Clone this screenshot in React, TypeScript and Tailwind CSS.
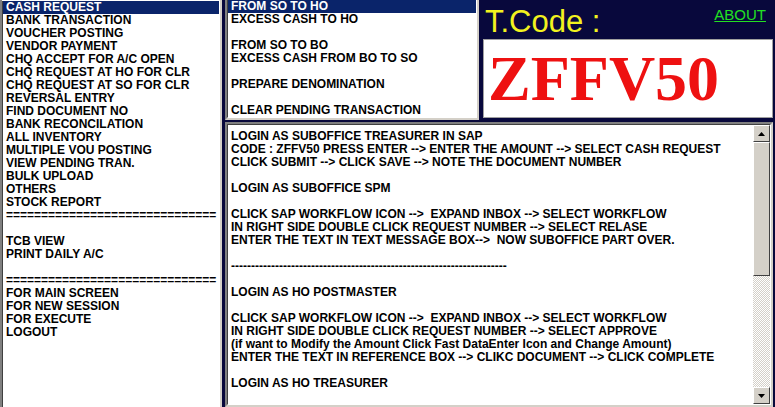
import React from 'react'

const mainItems = [
  'CASH REQUEST',
  'BANK TRANSACTION',
  'VOUCHER POSTING',
  'VENDOR PAYMENT',
  'CHQ ACCEPT FOR A/C OPEN',
  'CHQ REQUEST AT HO FOR CLR',
  'CHQ REQUEST AT SO FOR CLR',
  'REVERSAL ENTRY',
  'FIND DOCUMENT NO',
  'BANK RECONCILATION',
  'ALL INVENTORY',
  'MULTIPLE VOU POSTING',
  'VIEW PENDING TRAN.',
  'BULK UPLOAD',
  'OTHERS',
  'STOCK REPORT',
  '==============================',
  '',
  'TCB VIEW',
  'PRINT DAILY A/C',
  '',
  '==============================',
  'FOR MAIN SCREEN',
  'FOR NEW SESSION',
  'FOR EXECUTE',
  'LOGOUT',
]

const subItems = [
  'FROM SO TO HO',
  'EXCESS CASH TO HO',
  '',
  'FROM SO TO BO',
  'EXCESS CASH FROM BO TO SO',
  '',
  'PREPARE DENOMINATION',
  '',
  'CLEAR PENDING TRANSACTION',
]

const steps = [
  'LOGIN AS SUBOFFICE TREASURER IN SAP',
  'CODE : ZFFV50 PRESS ENTER --> ENTER THE AMOUNT --> SELECT CASH REQUEST',
  'CLICK SUBMIT --> CLICK SAVE --> NOTE THE DOCUMENT NUMBER',
  '',
  'LOGIN AS SUBOFFICE SPM',
  '',
  'CLICK SAP WORKFLOW ICON -->  EXPAND INBOX --> SELECT WORKFLOW',
  'IN RIGHT SIDE DOUBLE CLICK REQUEST NUMBER --> SELECT RELASE',
  'ENTER THE TEXT IN TEXT MESSAGE BOX-->  NOW SUBOFFICE PART OVER.',
  '',
  '---------------------------------------------------------------------',
  '',
  'LOGIN AS HO POSTMASTER',
  '',
  'CLICK SAP WORKFLOW ICON -->  EXPAND INBOX --> SELECT WORKFLOW',
  'IN RIGHT SIDE DOUBLE CLICK REQUEST NUMBER --> SELECT APPROVE',
  '(if want to Modify the Amount Click Fast DataEnter Icon and Change Amount)',
  'ENTER THE TEXT IN REFERENCE BOX --> CLIKC DOCUMENT --> CLICK COMPLETE',
  '',
  'LOGIN AS HO TREASURER',
]

// list boxes run off the top of the captured window, so no top edge
const openTop =
  'border-2 border-t-0 border-l-[#808080] border-r-[#d4d0c8] border-b-[#d4d0c8] bg-white'

function ListBox({ items, selected, className }: { items: string[]; selected: number; className?: string }) {
  return (
    <div className={openTop + ' overflow-hidden ' + (className ?? '')}>
      <div className="h-full overflow-hidden border border-t-0 border-l-[#404040] border-r-white border-b-white">
        {items.map((item, i) => (
          <div
            key={i}
            className={
              'h-[13px] overflow-hidden whitespace-nowrap px-[3px] text-[12px] font-bold leading-[13px] ' +
              (i === selected ? 'bg-[#0a246a] text-white' : 'text-black')
            }
          >
            {item || '\u00a0'}
          </div>
        ))}
      </div>
    </div>
  )
}

function ScrollButton({ up }: { up: boolean }) {
  return (
    <div className="flex h-[17px] w-[17px] items-center justify-center border border-t-white border-l-white border-r-[#404040] border-b-[#404040] bg-[#d4d0c8]">
      <svg width="7" height="4" viewBox="0 0 7 4">
        <path d={up ? 'M3.5 0 L7 4 L0 4 Z' : 'M0 0 L7 0 L3.5 4 Z'} fill="#000" />
      </svg>
    </div>
  )
}

export default function App() {
  return (
    <div
      className="flex h-[407px] w-[775px] gap-[3px] overflow-hidden bg-[#08083c]"
      style={{ fontFamily: '"Liberation Sans", Arial, sans-serif' }}
    >
      <ListBox items={mainItems} selected={0} className="h-[410px] w-[222px] shrink-0 pt-[1px]" />

      <div className="flex flex-1 flex-col gap-[2px] pr-[2px]">
        <div className="flex h-[120px] shrink-0 gap-[4px]">
          <ListBox items={subItems} selected={0} className="w-[254px] shrink-0" />

          <div className="flex flex-1 flex-col pb-[2px]">
            <div className="flex h-[39px] items-start justify-between">
              <span className="mt-[5px] pl-[2px] text-[31px] leading-[34px] text-[#f2f21e]">T.Code :</span>
              <a href="#" className="mr-[7px] mt-[6px] text-[15px] leading-[17px] text-[#22e022] underline">
                ABOUT
              </a>
            </div>
            <div className="flex flex-1 items-center border border-[#a0a0a0] bg-white pl-[4px]">
              <span
                className="text-[64px] font-bold leading-none text-[#ee1111]"
                style={{ fontFamily: '"Liberation Serif", "Times New Roman", serif' }}
              >
                ZFFV50
              </span>
            </div>
          </div>
        </div>

        <div className="flex min-h-0 flex-1 border-2 border-t-[#808080] border-l-[#808080] border-r-[#d4d0c8] border-b-[#d4d0c8] bg-white">
          <div className="flex flex-1 border border-t-[#404040] border-l-[#404040] border-r-white border-b-white">
            <div className="flex-1 overflow-hidden pl-[3px] pt-[5px]">
              {steps.map((s, i) => (
                <div key={i} className="h-[13px] whitespace-pre text-[12px] font-bold leading-[13px] text-black">
                  {s || '\u00a0'}
                </div>
              ))}
            </div>
            <div className="flex w-[17px] flex-col bg-[repeating-conic-gradient(#d4d0c8_0_25%,#ffffff_0_50%)] bg-[length:2px_2px]">
              <ScrollButton up />
              <div className="h-[134px] border border-t-white border-l-white border-r-[#404040] border-b-[#404040] bg-[#d4d0c8]" />
              <div className="flex-1" />
              <ScrollButton up={false} />
            </div>
          </div>
        </div>
      </div>
    </div>
  )
}
